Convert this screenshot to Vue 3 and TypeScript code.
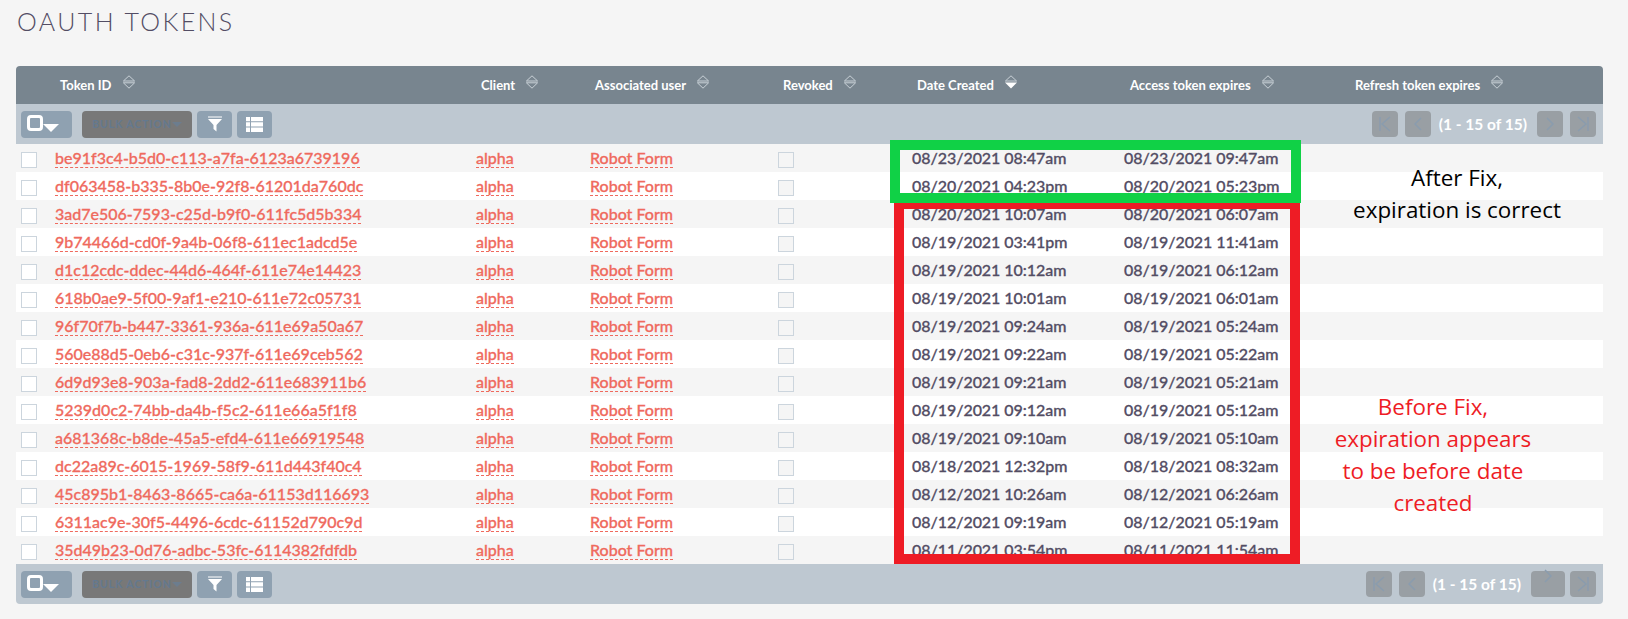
<script setup lang="ts">
const rows: [string, string, string][] = [
  ['be91f3c4-b5d0-c113-a7fa-6123a6739196', '08/23/2021 08:47am', '08/23/2021 09:47am'],
  ['df063458-b335-8b0e-92f8-61201da760dc', '08/20/2021 04:23pm', '08/20/2021 05:23pm'],
  ['3ad7e506-7593-c25d-b9f0-611fc5d5b334', '08/20/2021 10:07am', '08/20/2021 06:07am'],
  ['9b74466d-cd0f-9a4b-06f8-611ec1adcd5e', '08/19/2021 03:41pm', '08/19/2021 11:41am'],
  ['d1c12cdc-ddec-44d6-464f-611e74e14423', '08/19/2021 10:12am', '08/19/2021 06:12am'],
  ['618b0ae9-5f00-9af1-e210-611e72c05731', '08/19/2021 10:01am', '08/19/2021 06:01am'],
  ['96f70f7b-b447-3361-936a-611e69a50a67', '08/19/2021 09:24am', '08/19/2021 05:24am'],
  ['560e88d5-0eb6-c31c-937f-611e69ceb562', '08/19/2021 09:22am', '08/19/2021 05:22am'],
  ['6d9d93e8-903a-fad8-2dd2-611e683911b6', '08/19/2021 09:21am', '08/19/2021 05:21am'],
  ['5239d0c2-74bb-da4b-f5c2-611e66a5f1f8', '08/19/2021 09:12am', '08/19/2021 05:12am'],
  ['a681368c-b8de-45a5-efd4-611e66919548', '08/19/2021 09:10am', '08/19/2021 05:10am'],
  ['dc22a89c-6015-1969-58f9-611d443f40c4', '08/18/2021 12:32pm', '08/18/2021 08:32am'],
  ['45c895b1-8463-8665-ca6a-61153d116693', '08/12/2021 10:26am', '08/12/2021 06:26am'],
  ['6311ac9e-30f5-4496-6cdc-61152d790c9d', '08/12/2021 09:19am', '08/12/2021 05:19am'],
  ['35d49b23-0d76-adbc-53fc-6114382fdfdb', '08/11/2021 03:54pm', '08/11/2021 11:54am'],
]
const headers = [
  { label: 'Token ID', cls: 'h-token', active: false },
  { label: 'Client', cls: 'h-client', active: false },
  { label: 'Associated user', cls: 'h-user', active: false },
  { label: 'Revoked', cls: 'h-rev', active: false },
  { label: 'Date Created', cls: 'h-date', active: true },
  { label: 'Access token expires', cls: 'h-access', active: false },
  { label: 'Refresh token expires', cls: 'h-refresh', active: false },
]
const toolbars = ['top', 'bottom']
</script>

<template>
  <div class="page">
    <h2 class="title">OAUTH TOKENS</h2>
    <div class="panel">
      <div class="head grid">
        <span></span>
        <span v-for="h in headers" :key="h.label" class="hcell" :class="h.cls">
          {{ h.label }}
          <svg class="sort" width="14" height="14" viewBox="0 0 14 14">
            <path v-if="!h.active" d="M7 .8 L12.6 6 H1.4 Z M1.4 7.8 H12.6 L7 13.2 Z" fill="none" stroke="#c8d0d6" stroke-width="1" />
            <template v-else>
              <path d="M7 .8 L12.6 6 H1.4 Z" fill="none" stroke="#c8d0d6" stroke-width="1" />
              <path d="M1 7.5 H13 L7 13.5 Z" fill="#fff" />
            </template>
          </svg>
        </span>
      </div>

      <template v-for="(t, ti) in toolbars" :key="t">
        <div class="toolbar" :class="t">
          <div class="tools">
            <button class="btn sel">
              <span class="box"></span><span class="caret"></span>
            </button>
            <button class="btn bulk">BULK ACTION<span class="mini"></span></button>
            <button class="btn icon">
              <svg width="16" height="16" viewBox="0 0 16 16"><path d="M1 0.5 H15 V1.5 H1 Z M1 3 H15 L9.5 9 V15.5 L6.5 13 V9 Z" fill="#fff" /></svg>
            </button>
            <button class="btn icon">
              <svg width="17" height="15" viewBox="0 0 17 15"><path d="M0 0 H4 V4.3 H0 Z M5 0 H17 V4.3 H5 Z M0 5.3 H4 V9.6 H0 Z M5 5.3 H17 V9.6 H5 Z M0 10.6 H4 V15 H0 Z M5 10.6 H17 V15 H5 Z" fill="#fff" /></svg>
            </button>
          </div>
          <div class="pager">
            <button class="pg"><svg width="14" height="16" viewBox="0 0 14 16"><path d="M2 1 V15 M12 1 L4 8 L12 15" fill="none" stroke="#8a9cae" stroke-width="1.5" /></svg></button>
            <button class="pg"><svg width="14" height="16" viewBox="0 0 14 16"><path d="M10 2 L4 8 L10 14" fill="none" stroke="#8a9cae" stroke-width="1.5" /></svg></button>
            <span class="count">(1 - 15 of 15)</span>
            <button class="pg next"><svg width="14" height="16" viewBox="0 0 14 16"><path d="M4 2 L10 8 L4 14" fill="none" stroke="#8a9cae" stroke-width="1.5" /></svg></button>
            <button class="pg"><svg width="14" height="16" viewBox="0 0 14 16"><path d="M12 1 V15 M2 1 L10 8 L2 15" fill="none" stroke="#8a9cae" stroke-width="1.5" /></svg></button>
          </div>
        </div>
        <div v-if="ti === 0" class="body">
          <div v-for="(r, i) in rows" :key="r[0]" class="row grid" :class="{ odd: i % 2 === 0 }">
            <span class="check"></span>
            <span class="cell"><a class="link">{{ r[0] }}</a></span>
            <span class="cell"><a class="link">alpha</a></span>
            <span class="cell"><a class="link">Robot Form</a></span>
            <span class="rev"><i class="check small"></i></span>
            <span class="cell date d1">{{ r[1] }}</span>
            <span class="cell date d2">{{ r[2] }}</span>
            <span></span>
          </div>
        </div>
      </template>
    </div>

    <div class="mark green"></div>
    <div class="mark red"></div>
    <div class="note black">After Fix,<br />expiration is correct</div>
    <div class="note crimson">Before Fix,<br />expiration appears<br />to be before date<br />created</div>
  </div>
</template>

<style>
html, body { margin: 0; background: #f5f5f5; }
</style>

<style scoped>
.page {
  position: relative;
  width: 1628px;
  height: 619px;
  overflow: hidden;
  background: #f5f5f5;
  font-family: Lato, "Open Sans", sans-serif;
  padding-top: 7px;
  box-sizing: border-box;
}
.title {
  margin: 0 0 0 17px;
  height: 59px;
  font-size: 25px;
  line-height: 29px;
  font-weight: 300;
  letter-spacing: 2.4px;
  color: #534d64;
}
.panel { margin-left: 16px; width: 1587px; }
.grid {
  display: grid;
  grid-template-columns: 39px 421px 114px 184px 134px 213px 230px 1fr;
  align-items: center;
}
.head {
  height: 38px;
  background: #78858f;
  border-radius: 4px 4px 0 0;
  color: #fff;
  font-size: 13px;
  font-weight: 700;
}
.hcell { display: flex; align-items: center; gap: 10px; white-space: nowrap; }
.sort { position: relative; top: -3px; }
.h-token { padding-left: 5px; }
.h-client { padding-left: 5px; }
.h-user { padding-left: 5px; }
.h-rev { padding-left: 9px; }
.h-date { padding-left: 9px; }
.h-access { padding-left: 9px; }
.h-refresh { padding-left: 4px; }

.toolbar {
  height: 40px;
  background: #bec8d1;
  display: flex;
  justify-content: space-between;
  align-items: center;
  padding: 0 7px 0 5px;
}
.toolbar.bottom { border-radius: 0 0 4px 4px; }
.tools { display: flex; gap: 5px; align-items: center; }
.btn {
  height: 27px;
  border: 0;
  padding: 0;
  background: #8fa1b1;
  border-radius: 4px;
  display: flex;
  align-items: center;
  justify-content: center;
}
.sel { width: 51px; position: relative; margin-right: 5px; }
.box {
  position: absolute;
  left: 6px;
  top: 4px;
  width: 10px;
  height: 10px;
  border: 3px solid #fff;
  border-radius: 4px;
  background: #8fa1b1;
}
.caret {
  position: absolute;
  left: 22px;
  top: 13px;
  border-left: 8px solid transparent;
  border-right: 8px solid transparent;
  border-top: 8px solid #fff;
}
.bulk {
  width: 110px;
  background: #787878;
  color: #64798f;
  font-family: Lato, sans-serif;
  font-size: 10.5px;
  font-weight: 700;
  letter-spacing: 0.9px;
}
.mini {
  border-left: 5px solid transparent;
  border-right: 5px solid transparent;
  border-top: 5px solid #6c7d8e;
}
.icon { width: 35px; }
.pager { display: flex; align-items: center; gap: 7px; }
.pg {
  width: 26px;
  height: 26px;
  border: 0;
  padding: 0;
  background: #999fa4;
  border-radius: 4px;
  display: flex;
  align-items: center;
  justify-content: center;
}
.count { color: #fff; font-size: 15.5px; font-weight: 700; margin: 0 3px 0 1px; white-space: nowrap; }
.bottom .next { width: 34px; margin-right: -2px; }
.bottom .next svg { position: relative; top: -8px; }

.row { height: 28px; background: #fff; font-size: 16px; }
.row.odd { background: #f5f5f5; }
.row > span { white-space: nowrap; }
.cell { padding-bottom: 2px; -webkit-text-stroke: 0.3px; }
.link {
  color: #ef6a5e;
  font-weight: 500;
  border-bottom: 1px dashed #ef6a5e;
}
.check {
  display: block;
  width: 14px;
  height: 14px;
  margin: 3px 0 0 5px;
  background: #fff;
  border: 1px solid #ccd5dd;
}
.check.small { margin: 3px 0 0; background: #f5f5f5; }
.rev { padding-left: 4px; }
.date { color: #534d64; font-weight: 500; letter-spacing: -0.05px; }
.d1 { padding-left: 4px; }
.d2 { padding-left: 3px; }

.mark { position: absolute; box-sizing: border-box; border-style: solid; }
.green { left: 890px; top: 140px; width: 411px; height: 63px; border: 10px solid #10d146; z-index: 2; }
.red { left: 894px; top: 203px; width: 406px; height: 361px; border-width: 6px 10px 10px; border-color: #ee1c25; }
.note {
  position: absolute;
  text-align: center;
  font-family: "Open Sans", sans-serif;
  font-size: 22.4px;
  line-height: 32px;
}
.black { left: 1297px; width: 320px; top: 162px; color: #000; }
.crimson { left: 1273px; width: 320px; top: 390.5px; color: #ee1c25; }
</style>
